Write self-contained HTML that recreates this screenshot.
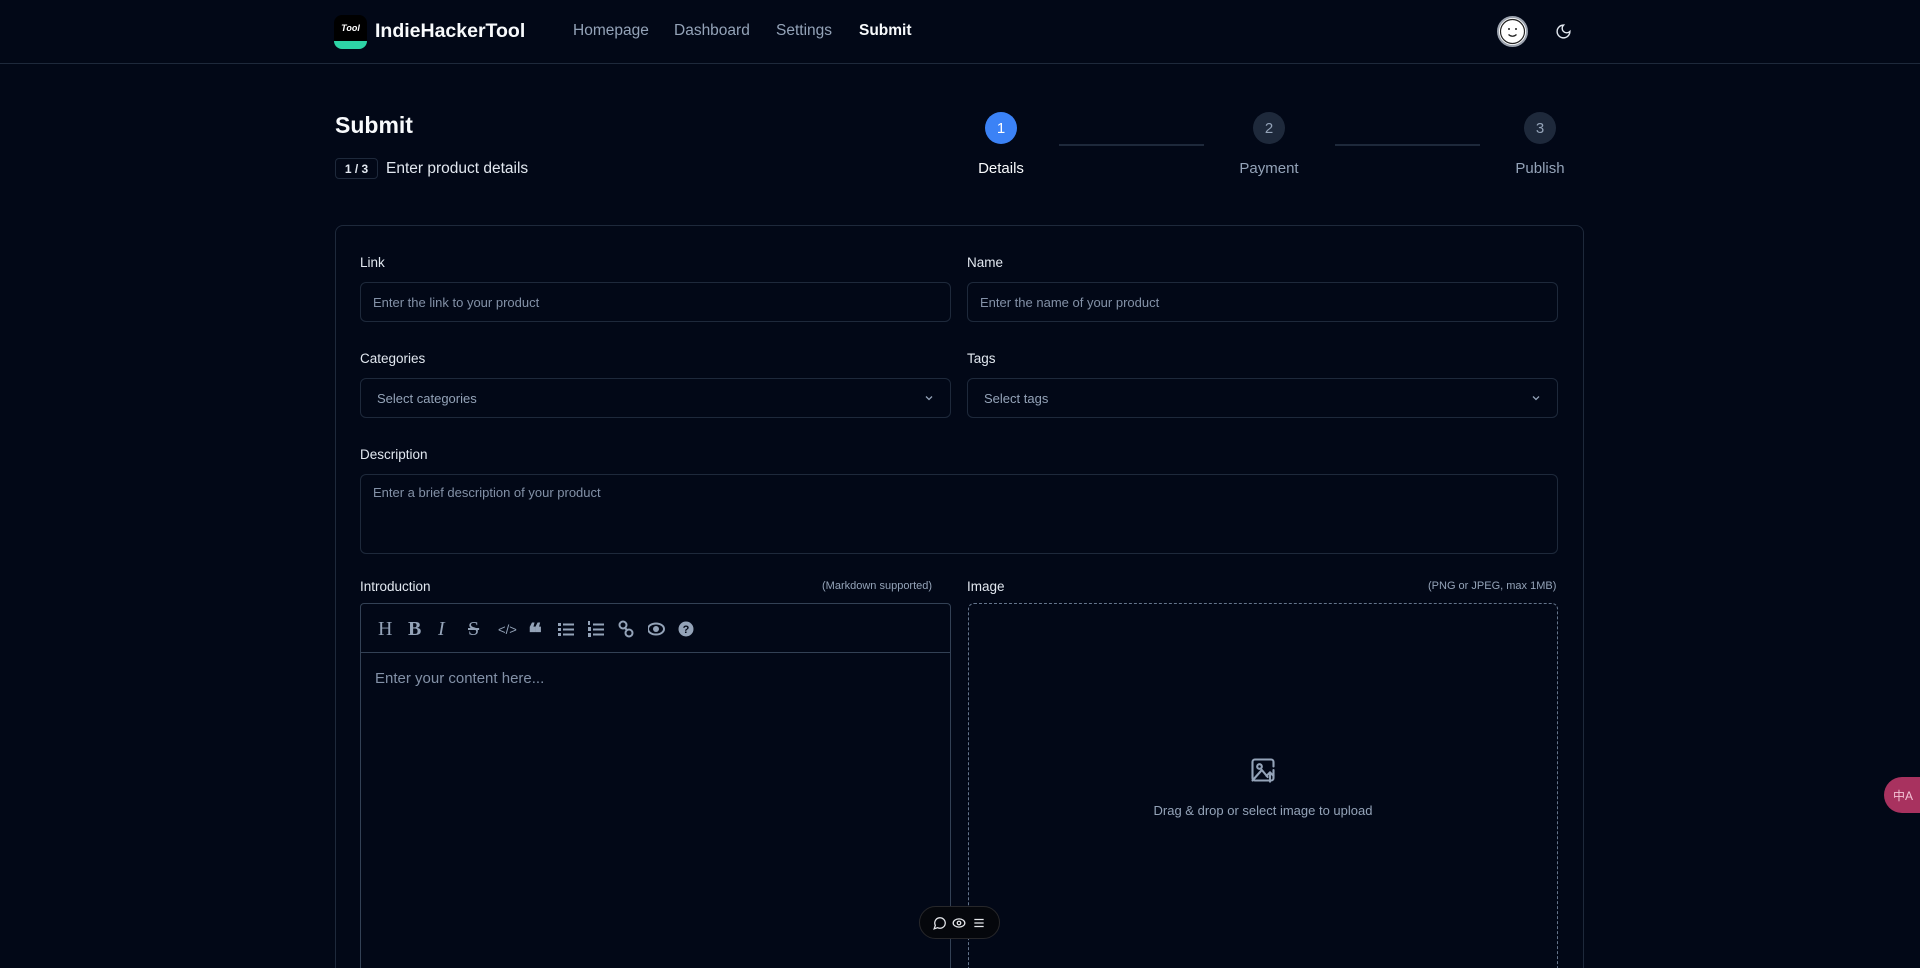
<!DOCTYPE html>
<html style="overflow:hidden;height:968px"><head><meta charset="utf-8"><style>
*{box-sizing:border-box;margin:0;padding:0}
html,body{width:1920px;height:968px;overflow:hidden}
body{background:#020817;font-family:"Liberation Sans","Noto Sans CJK SC",sans-serif;color:#f8fafc;position:relative}
#w{position:absolute;left:0;top:0;width:1920px;height:968px;overflow:hidden}
.a{position:absolute}
.hdr{left:0;top:0;width:1920px;height:64px;border-bottom:1px solid #1e293b}
.nav{top:22px;font-size:15.5px;color:#94a3b8}
.lbl{font-size:13.5px;color:#e2e8f0}
.inp{border:1px solid #1e293b;border-radius:6px;font-size:13px;color:#8391a7;padding-left:12px;display:flex;align-items:center}
.circ{width:32px;height:32px;border-radius:50%;display:flex;align-items:center;justify-content:center;font-size:15px;color:#94a3b8;background:#1e293b}
.slab{font-size:15px;color:#94a3b8;transform:translateX(-50%);top:160px}
.tb{font-family:"Liberation Serif",serif;font-size:20px;color:#94a3b8}
</style></head><body><div id="w">
<div class="a hdr"></div>
<div class="a" style="left:334px;top:15px;width:33px;height:34px;border-radius:8px;background:#000;overflow:hidden">
 <div style="position:absolute;left:0;right:0;top:8px;text-align:center;font-size:9px;font-style:italic;font-weight:bold;color:#fff">Tool</div>
 <div style="position:absolute;left:0;right:0;bottom:0;height:8px;background:#2dd4a6"></div>
</div>
<div class="a" style="left:375px;top:20px;font-size:19.5px;font-weight:bold;color:#f8fafc">IndieHackerTool</div>
<div class="a nav" style="left:573px">Homepage</div>
<div class="a nav" style="left:674px">Dashboard</div>
<div class="a nav" style="left:776px">Settings</div>
<div class="a nav" style="left:859px;color:#f8fafc;font-weight:bold">Submit</div>
<div class="a" style="left:1497px;top:16px;width:31px;height:31px;border-radius:50%;background:#fff;border:2px solid #9ca3af"></div>
<svg class="a" style="left:1497px;top:16px" width="31" height="31" viewBox="0 0 31 31"><circle cx="15.5" cy="15.5" r="12" fill="none" stroke="#222" stroke-width="1.2"/><circle cx="12" cy="13" r="1" fill="#222"/><circle cx="19" cy="13" r="1" fill="#222"/><path d="M11.5 18.5q4 3.5 8 0" fill="none" stroke="#222" stroke-width="1.2"/></svg>
<svg class="a" style="left:1555px;top:23px" width="17" height="17" viewBox="0 0 24 24" fill="none" stroke="#e2e8f0" stroke-width="2" stroke-linecap="round"><path d="M12 3a6 6 0 0 0 9 9 9 9 0 1 1-9-9Z"/></svg>

<div class="a" style="left:335px;top:112px;font-size:23px;font-weight:bold">Submit</div>
<div class="a" style="left:335px;top:158px;width:43px;height:21px;border:1px solid #1e293b;border-radius:4px;font-size:12px;font-weight:bold;display:flex;align-items:center;justify-content:center;color:#e2e8f0">1 / 3</div>
<div class="a" style="left:386px;top:160px;font-size:15.5px;color:#e2e8f0">Enter product details</div>

<div class="a circ" style="left:985px;top:112px;background:#3b82f6;color:#fff">1</div>
<div class="a circ" style="left:1253px;top:112px">2</div>
<div class="a circ" style="left:1524px;top:112px">3</div>
<div class="a" style="left:1059px;top:144px;width:145px;height:2px;background:#1e293b"></div>
<div class="a" style="left:1335px;top:144px;width:145px;height:2px;background:#1e293b"></div>
<div class="a slab" style="left:1001px;color:#f8fafc">Details</div>
<div class="a slab" style="left:1269px">Payment</div>
<div class="a slab" style="left:1540px">Publish</div>

<div class="a" style="left:335px;top:225px;width:1249px;height:743px;border:1px solid #1e293b;border-bottom:none;border-radius:8px 8px 0 0"></div>

<div class="a lbl" style="left:360px;top:255px">Link</div>
<div class="a lbl" style="left:967px;top:255px">Name</div>
<div class="a inp" style="left:360px;top:282px;width:591px;height:40px">Enter the link to your product</div>
<div class="a inp" style="left:967px;top:282px;width:591px;height:40px">Enter the name of your product</div>

<div class="a lbl" style="left:360px;top:351px">Categories</div>
<div class="a lbl" style="left:967px;top:351px">Tags</div>
<div class="a inp" style="left:360px;top:378px;width:591px;height:40px;padding-left:16px;color:#94a3b8">Select categories</div>
<div class="a inp" style="left:967px;top:378px;width:591px;height:40px;padding-left:16px;color:#94a3b8">Select tags</div>
<svg class="a" style="left:923px;top:392px" width="12" height="12" viewBox="0 0 24 24" fill="none" stroke="#94a3b8" stroke-width="2.5"><path d="m6 9 6 6 6-6"/></svg>
<svg class="a" style="left:1530px;top:392px" width="12" height="12" viewBox="0 0 24 24" fill="none" stroke="#94a3b8" stroke-width="2.5"><path d="m6 9 6 6 6-6"/></svg>

<div class="a lbl" style="left:360px;top:447px">Description</div>
<div class="a inp" style="left:360px;top:474px;width:1198px;height:80px;align-items:flex-start;padding-top:10px">Enter a brief description of your product</div>

<div class="a lbl" style="left:360px;top:579px">Introduction</div>
<div class="a" style="left:822px;top:580px;font-size:11px;color:#94a3b8">(Markdown supported)</div>
<div class="a lbl" style="left:967px;top:579px">Image</div>
<div class="a" style="left:1428px;top:580px;font-size:11px;color:#94a3b8">(PNG or JPEG, max 1MB)</div>

<div class="a" style="left:360px;top:603px;width:591px;height:365px;border:1px solid #334155;border-bottom:none;border-radius:4px 4px 0 0"></div>
<div class="a" style="left:361px;top:652px;width:589px;height:1px;background:#334155"></div>
<div class="a" style="left:378px;top:615px;display:flex;gap:0;align-items:center">
 <span class="tb" style="width:30px">H</span><span class="tb" style="width:30px;font-weight:bold">B</span><span class="tb" style="width:30px;font-style:italic">I</span><span class="tb" style="width:30px;text-decoration:line-through">S</span>
 <span style="width:30px;font-size:13px;color:#94a3b8">&lt;/&gt;</span>
 <span style="width:30px;font-size:26px;font-weight:bold;color:#94a3b8;line-height:20px;padding-top:8px">❝</span>
 <svg width="30" height="18" viewBox="0 0 30 18"><g fill="#94a3b8"><rect x="0" y="3" width="3" height="3"/><rect x="0" y="8" width="3" height="3"/><rect x="0" y="13" width="3" height="3"/><rect x="5" y="3.5" width="11" height="2"/><rect x="5" y="8.5" width="11" height="2"/><rect x="5" y="13.5" width="11" height="2"/></g></svg>
 <svg width="30" height="18" viewBox="0 0 30 18"><g fill="#94a3b8"><rect x="0" y="1" width="2" height="4"/><rect x="0" y="7" width="3" height="4"/><rect x="0" y="13" width="3" height="4"/><rect x="5" y="3.5" width="11" height="2"/><rect x="5" y="8.5" width="11" height="2"/><rect x="5" y="13.5" width="11" height="2"/></g></svg>
 <svg width="30" height="18" viewBox="0 0 30 18" fill="none" stroke="#94a3b8" stroke-width="2"><circle cx="5" cy="5" r="3.5"/><circle cx="11" cy="13" r="3.5"/><path d="M7 8l2 2"/></svg>
 <svg width="30" height="18" viewBox="0 0 30 18"><ellipse cx="8" cy="9" rx="8" ry="5.5" fill="none" stroke="#94a3b8" stroke-width="2"/><circle cx="8" cy="9" r="3" fill="#94a3b8"/></svg>
 <svg width="30" height="18" viewBox="0 0 30 18"><circle cx="8" cy="9" r="7.5" fill="#94a3b8"/><text x="8" y="13" font-size="11" font-weight="bold" text-anchor="middle" fill="#020817" font-family="Liberation Sans">?</text></svg>
</div>
<div class="a" style="left:375px;top:670px;font-size:15px;color:#8391a7">Enter your content here...</div>

<div class="a" style="left:968px;top:603px;width:590px;height:365px;border:1.5px dashed #64748b;border-bottom:none;border-radius:6px 6px 0 0"></div>
<svg class="a" style="left:1249px;top:756px" width="28" height="28" viewBox="0 0 24 24" fill="none" stroke="#94a3b8" stroke-width="1.8" stroke-linecap="round" stroke-linejoin="round"><path d="M21 12v7a2 2 0 0 1-2 2H5a2 2 0 0 1-2-2V5a2 2 0 0 1 2-2h14a2 2 0 0 1 2 2v4"/><circle cx="9" cy="9" r="2"/><path d="m3 21 8-9 5 6"/><path d="M18 22v-8m-3 3 3-3 3 3"/></svg>
<div class="a" style="left:1263px;top:803px;transform:translateX(-50%);font-size:13px;color:#94a3b8;white-space:nowrap">Drag &amp; drop or select image to upload</div>

<div class="a" style="left:919px;top:906px;width:81px;height:33px;border-radius:17px;background:#05070c;border:1px solid #27272a;display:flex;align-items:center;justify-content:space-around;padding:0 10px">
 <svg width="14" height="14" viewBox="0 0 24 24" fill="none" stroke="#e5e7eb" stroke-width="2.2"><path d="M7.9 20A9 9 0 1 0 4 16.1L2 22Z"/></svg>
 <svg width="14" height="14" viewBox="0 0 24 24" fill="none" stroke="#e5e7eb" stroke-width="2.2"><ellipse cx="12" cy="12" rx="10" ry="7"/><circle cx="12" cy="12" r="3"/></svg>
 <svg width="14" height="14" viewBox="0 0 24 24" fill="none" stroke="#e5e7eb" stroke-width="2.2"><path d="M4 6h16M4 12h16M4 18h16"/></svg>
</div>
<div class="a" style="left:1884px;top:777px;width:36px;height:36px;border-radius:18px 0 0 18px;background:#a8325f;display:flex;align-items:center;padding-left:9px;font-size:12px;color:#f3c4d6">中A</div>
</div></body></html>
